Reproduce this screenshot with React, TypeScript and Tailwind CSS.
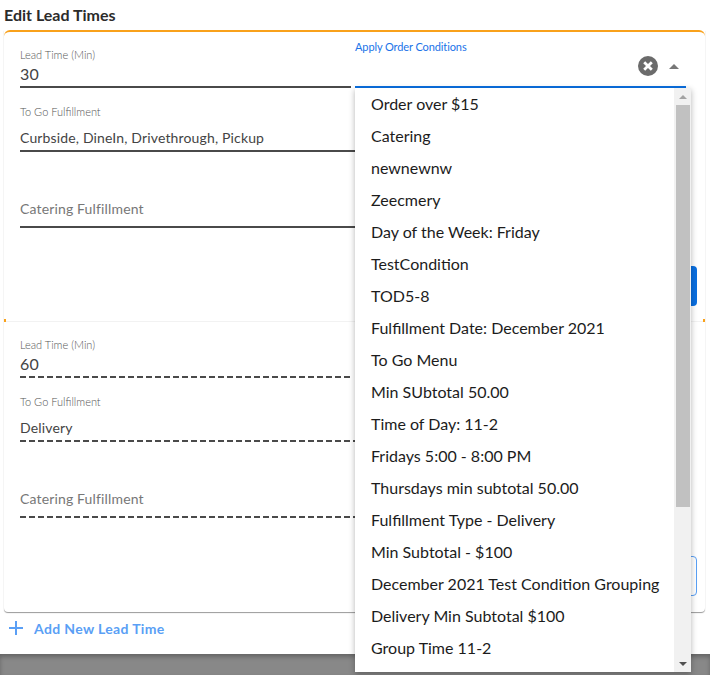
const menuItems = [
  "Order over $15",
  "Catering",
  "newnewnw",
  "Zeecmery",
  "Day of the Week: Friday",
  "TestCondition",
  "TOD5-8",
  "Fulfillment Date: December 2021",
  "To Go Menu",
  "Min SUbtotal 50.00",
  "Time of Day: 11-2",
  "Fridays 5:00 - 8:00 PM",
  "Thursdays min subtotal 50.00",
  "Fulfillment Type - Delivery",
  "Min Subtotal - $100",
  "December 2021 Test Condition Grouping",
  "Delivery Min Subtotal $100",
  "Group Time 11-2",
];

function Label({ text }: { text: string }) {
  return <div className="h-[14px] text-[11px] leading-[14px] font-light text-[#555]">{text}</div>;
}

function DashedLine() {
  return <div className="h-[2px] bg-[repeating-linear-gradient(90deg,#4a4a4a_0_6px,transparent_6px_9px)]" />;
}

function ConditionsMenu() {
  return (
    <div className="absolute left-[355px] top-[88px] z-10 flex h-[584px] w-[336px] bg-white shadow-[0_2px_6px_rgba(0,0,0,0.3)]">
      <ul className="flex-1 overflow-hidden">
        {menuItems.map((item) => (
          <li key={item} className="flex h-8 items-center pl-4 text-base text-[#1c1c1c] whitespace-nowrap">
            {item}
          </li>
        ))}
      </ul>
      <div className="flex w-[17px] flex-col items-center bg-[#f1f1f1]">
        <div className="flex h-[17px] w-full items-center justify-center">
          <div className="h-0 w-0 border-x-[4px] border-b-[4px] border-x-transparent border-b-[#a3a3a3]" />
        </div>
        <div className="h-[402px] w-[14px] bg-[#c1c1c1]" />
        <div className="flex-1" />
        <div className="flex h-[17px] w-full items-center justify-center">
          <div className="h-0 w-0 border-x-[4px] border-t-[4px] border-x-transparent border-t-[#505050]" />
        </div>
      </div>
    </div>
  );
}

export default function App() {
  return (
    <div className="relative flex h-[675px] w-[710px] flex-col overflow-hidden bg-white font-['Lato',sans-serif]">
      <h1 className="h-[30px] pl-1 pt-[5px] text-base leading-[20px] font-bold text-[#2b2b2b]">Edit Lead Times</h1>

      <div className="mx-1 w-[701px] rounded-b shadow-[0_1px_1px_rgba(0,0,0,0.4)]">
        {/* first lead time */}
        <section className="relative flex h-[292px] flex-col rounded-t-md border-t-2 border-[#f9a11b] pl-4 border-b border-b-[#f2f2f2]">
          <div className="absolute bottom-[-1px] left-0 h-[3px] w-[2px] bg-[#f9a11b]" />
          <div className="absolute bottom-[-1px] right-0 h-[3px] w-[2px] bg-[#f9a11b]" />
          <div className="flex h-14 gap-1">
            <div className="flex w-[331px] flex-col border-b-2 border-[#4a4a4a] pt-4">
              <Label text="Lead Time (Min)" />
              <div className="h-6 text-base leading-6 text-[#444] tracking-[0.15px]">30</div>
            </div>
            <div className="flex w-[331px] flex-col border-b-2 border-[#0a6fe0] pt-2">
              <div className="h-[14px] text-[11px] leading-[14px] text-[#1a73e8] tracking-[-0.1px]">Apply Order Conditions</div>
              <div className="flex justify-end gap-[2px]">
                <svg viewBox="0 0 24 24" className="h-6 w-6">
                  <circle cx="12" cy="12" r="10" fill="#6b6b6b" />
                  <path d="M8.2 8.2l7.6 7.6M15.8 8.2l-7.6 7.6" stroke="#fff" strokeWidth="2.8" />
                </svg>
                <svg viewBox="0 0 24 24" className="mt-px h-6 w-6 fill-[#777]">
                  <path d="M7 14l5-5 5 5z" />
                </svg>
              </div>
            </div>
          </div>
          <div className="mt-[17px] w-[666px] border-b-2 border-[#4a4a4a]">
            <Label text="To Go Fulfillment" />
            <div className="mt-[7px] h-6 text-sm leading-6 text-[#444] tracking-[0.15px]">Curbside, DineIn, Drivethrough, Pickup</div>
          </div>
          <div className="mt-[45px] w-[666px] border-b-2 border-[#4a4a4a] pb-[5px]">
            <div className="h-6 text-sm leading-6 text-[#777] tracking-[0.15px]">Catering Fulfillment</div>
          </div>
          <button aria-label="Save" className="mt-[38px] mr-2 h-10 w-24 self-end rounded bg-[#0a6fe0]" />
        </section>

        {/* second lead time */}
        <section className="flex h-[290px] flex-col pl-4">
          <div className="w-[331px] pt-4">
            <Label text="Lead Time (Min)" />
            <div className="h-6 text-base leading-6 text-[#444] tracking-[0.15px]">60</div>
            <DashedLine />
          </div>
          <div className="mt-[17px] w-[666px]">
            <Label text="To Go Fulfillment" />
            <div className="mt-[7px] h-6 text-sm leading-6 text-[#444] tracking-[0.15px]">Delivery</div>
            <DashedLine />
          </div>
          <div className="mt-[45px] w-[666px]">
            <div className="mb-[5px] h-6 text-sm leading-6 text-[#777] tracking-[0.15px]">Catering Fulfillment</div>
            <DashedLine />
          </div>
          <button aria-label="Remove" className="mt-[38px] mr-2 h-10 w-24 self-end rounded border border-[#5aa0f5]" />
        </section>
      </div>

      <div className="flex h-[42px] items-start pl-[9px] pt-[6px] pb-[10px]">
        <svg viewBox="0 0 14 14" className="mt-[3px] h-[14px] w-[14px] stroke-[#5a9ff5] stroke-2">
          <path d="M7 0v14M0 7h14" />
        </svg>
        <span className="ml-[11px] text-sm leading-[22px] font-bold text-[#5a9ff5] tracking-[0.35px]">Add New Lead Time</span>
      </div>

      <div className="flex-1 bg-[#888] shadow-[inset_0_3px_4px_rgba(0,0,0,0.25)]" />

      <ConditionsMenu />
    </div>
  );
}
